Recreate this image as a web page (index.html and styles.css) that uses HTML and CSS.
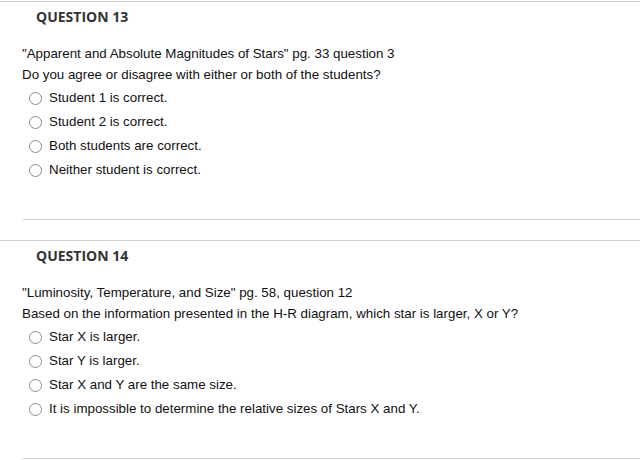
FILE: index.html
```html
<!DOCTYPE html>
<html>
<head>
<meta charset="utf-8">
<link rel="stylesheet" href="styles.css">
</head>
<body>
<div class="page">
  <section class="question">
    <h2 class="q-title">QUESTION 13</h2>
    <div class="q-text">
      <p>"Apparent and Absolute Magnitudes of Stars" pg. 33 question 3</p>
      <p>Do you agree or disagree with either or both of the students?</p>
    </div>
    <ul class="options">
      <li class="option"><span class="radio"></span><span class="label">Student 1 is correct.</span></li>
      <li class="option"><span class="radio"></span><span class="label">Student 2 is correct.</span></li>
      <li class="option"><span class="radio"></span><span class="label">Both students are correct.</span></li>
      <li class="option"><span class="radio"></span><span class="label">Neither student is correct.</span></li>
    </ul>
    <hr class="sep">
  </section>
  <section class="question">
    <h2 class="q-title">QUESTION 14</h2>
    <div class="q-text">
      <p>"Luminosity, Temperature, and Size" pg. 58, question 12</p>
      <p>Based on the information presented in the H-R diagram, which star is larger, X or Y?</p>
    </div>
    <ul class="options">
      <li class="option"><span class="radio"></span><span class="label">Star X is larger.</span></li>
      <li class="option"><span class="radio"></span><span class="label">Star Y is larger.</span></li>
      <li class="option"><span class="radio"></span><span class="label">Star X and Y are the same size.</span></li>
      <li class="option"><span class="radio"></span><span class="label">It is impossible to determine the relative sizes of Stars X and Y.</span></li>
    </ul>
    <hr class="sep">
  </section>
</div>
</body>
</html>
```
FILE: styles.css
```css
html, body {
  margin: 0;
  padding: 0;
  background: #fff;
}
.page {
  padding-top: 1px;
  font-family: "Liberation Sans", Arial, sans-serif;
  font-size: 10pt;
  color: #111;
}
.question {
  border-top: 1px solid #d0d0d0;
  margin-bottom: 20px;
}
.q-title {
  margin: 6px 0 0 0;
  padding-left: 36px;
  font-family: "Open Sans", sans-serif;
  font-weight: 700;
  font-size: 14px;
  line-height: 18px;
  color: #333;
}
.q-text {
  margin-top: 17px;
  padding-left: 22px;
}
.q-text p {
  margin: 0;
  line-height: 21px;
}
.options {
  list-style: none;
  margin: 1px 0 0 0;
  padding: 0 0 0 29px;
}
.option {
  display: flex;
  align-items: center;
  gap: 7px;
  height: 24px;
  line-height: 24px;
}
.radio {
  box-sizing: border-box;
  width: 13px;
  height: 13px;
  border: 1px solid #8a8a8a;
  border-radius: 50%;
  background: #fff;
  flex: none;
}
.sep {
  margin: 37px 0 0 23px;
  border: 0;
  border-top: 1px solid #d0d0d0;
  height: 0;
}
```
